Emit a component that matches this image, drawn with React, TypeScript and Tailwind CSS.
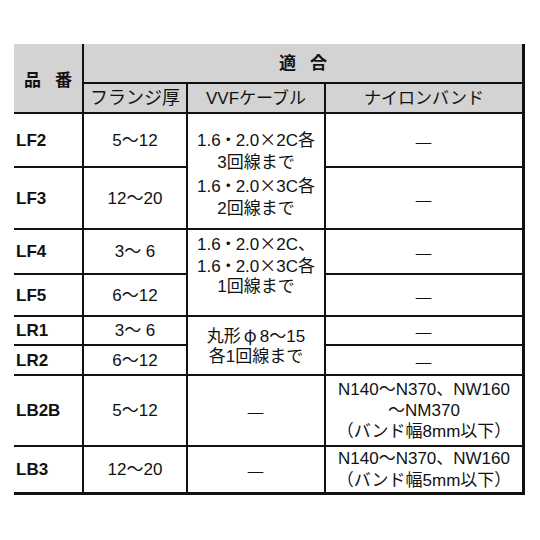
import React from "react";

const X = () => <span className="inline-block font-['Noto_Sans_CJK_JP',sans-serif]">×</span>;
const Dot = () => <span className="inline-block font-['Noto_Sans_CJK_JP',sans-serif] mx-[-1px]">・</span>;

export default function App() {
  const cell = "bg-white flex items-center justify-center text-center";
  const head = "bg-[#d3d3d3] flex items-center justify-center";
  const label = "bg-white flex items-center pl-[2px] font-bold";
  const dash = <span className="font-['Noto_Sans_CJK_JP',sans-serif] scale-x-[1.15] inline-block">—</span>;
  return (
    <div className="w-[540px] h-[540px] bg-white font-['Liberation_Sans','Noto_Sans_CJK_JP',sans-serif] text-[17px] text-[#111] leading-none">
      <div className="pt-[44px] pl-[14px]">
        <div className="grid w-[511px] grid-cols-[68px_102px_136px_196px] grid-rows-[38px_28px_52px_60px_43px_40px_27px_28px_69px_45px] gap-[2px] bg-[#111] pr-[3px] pb-[3px]">
          <div className={`${head} row-span-2 font-bold gap-[14px] pt-[4px]`}>
            <span>品</span>
            <span>番</span>
          </div>
          <div className={`${head} col-span-3 font-bold gap-[14px]`}>
            <span>適</span>
            <span>合</span>
          </div>
          <div className={`${head} text-[18px]`}>フランジ厚</div>
          <div className={head}>VVFケーブル</div>
          <div className={head}>ナイロンバンド</div>

          {/* LF2 */}
          <div className={label}>LF2</div>
          <div className={cell}>5〜12</div>
          <div className={`${cell} row-span-2 flex-col leading-[22px] pt-[6px]`}>
            <div>1.6<Dot />2.0<X />2C各</div>
            <div>3回線まで</div>
            <div>1.6<Dot />2.0<X />3C各</div>
            <div>2回線まで</div>
          </div>
          <div className={cell}>{dash}</div>

          {/* LF3 */}
          <div className={label}>LF3</div>
          <div className={cell}>12〜20</div>
          <div className={cell}>{dash}</div>

          {/* LF4 */}
          <div className={label}>LF4</div>
          <div className={cell}>3〜 6</div>
          <div className={`${cell} row-span-2 flex-col leading-[20px] pb-[15px]`}>
            <div>1.6<Dot />2.0<X />2C、</div>
            <div>1.6<Dot />2.0<X />3C各</div>
            <div>1回線まで</div>
          </div>
          <div className={cell}>{dash}</div>

          {/* LF5 */}
          <div className={label}>LF5</div>
          <div className={cell}>6〜12</div>
          <div className={cell}>{dash}</div>

          {/* LR1 */}
          <div className={label}>LR1</div>
          <div className={cell}>3〜 6</div>
          <div className={`${cell} row-span-2 flex-col leading-[20px]`}>
            <div>丸形<span className="inline-block font-['Noto_Sans_CJK_JP',sans-serif] mx-[3px]">φ</span>8〜15</div>
            <div>各1回線まで</div>
          </div>
          <div className={cell}>{dash}</div>

          {/* LR2 */}
          <div className={label}>LR2</div>
          <div className={cell}>6〜12</div>
          <div className={cell}>{dash}</div>

          {/* LB2B */}
          <div className={label}>LB2B</div>
          <div className={cell}>5〜12</div>
          <div className={cell}>{dash}</div>
          <div className={`${cell} flex-col leading-[21px]`}>
            <div>N140〜N370、NW160</div>
            <div>〜NM370</div>
            <div>（バンド幅8mm以下）</div>
          </div>

          {/* LB3 */}
          <div className={label}>LB3</div>
          <div className={cell}>12〜20</div>
          <div className={cell}>{dash}</div>
          <div className={`${cell} flex-col leading-[22px]`}>
            <div>N140〜N370、NW160</div>
            <div>（バンド幅5mm以下）</div>
          </div>
        </div>
      </div>
    </div>
  );
}
